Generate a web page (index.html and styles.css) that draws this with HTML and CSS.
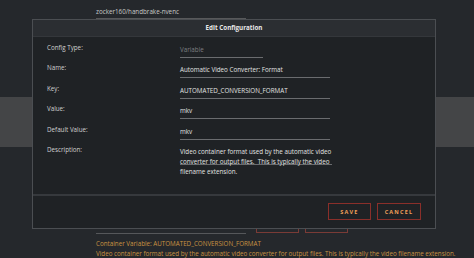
FILE: index.html
```html
<!DOCTYPE html>
<html lang="en">
<head>
    <meta charset="UTF-8">
    <title>Edit Configuration</title>
    <link rel="stylesheet" href="styles.css">
</head>
<body>
    <div class="page">
        <div class="repo">zocker160/handbrake-nvenc</div>
        <div class="band"></div>
        <div class="ghost-row">
            <div class="ghost-line"></div>
            <span class="ghost-btn"></span>
            <span class="ghost-btn"></span>
        </div>
        <p class="hint">Container Variable: AUTOMATED_CONVERSION_FORMAT</p>
        <p class="hint">Video container format used by the automatic video converter for output files. This is typically the video filename extension.</p>
    </div>

    <div class="modal">
        <div class="modal-head">Edit Configuration</div>
        <div class="modal-body">
            <div class="row">
                <div class="label">Config Type:</div>
                <div class="field short dim">Variable</div>
            </div>
            <div class="row">
                <div class="label">Name:</div>
                <div class="field">Automatic Video Converter: Format</div>
            </div>
            <div class="row">
                <div class="label">Key:</div>
                <div class="field">AUTOMATED_CONVERSION_FORMAT</div>
            </div>
            <div class="row">
                <div class="label">Value:</div>
                <div class="field">mkv</div>
            </div>
            <div class="row">
                <div class="label">Default Value:</div>
                <div class="field">mkv</div>
            </div>
            <div class="row">
                <div class="label">Description:</div>
                <div class="field desc">Video container format used by the automatic video<br>converter for output files.&nbsp; This is typically the video<br>filename extension.</div>
            </div>
        </div>
        <div class="modal-foot">
            <button class="btn">SAVE</button>
            <button class="btn">CANCEL</button>
        </div>
    </div>
</body>
</html>
```

FILE: styles.css
```css
body {
    margin: 0;
    background-color: #25282c;
    font-family: "Open Sans", "Noto Sans", sans-serif;
    font-size: 6.25px;
    color: #d8d8d8;
    overflow: hidden;
}

.page {
    height: 258px;
}

.repo {
    margin-left: 96px;
    width: 150px;
    height: 10px;
    padding-top: 8px;
    line-height: 8px;
    color: #c8c8c8;
    border-bottom: 1px solid #58595b;
}

.band {
    margin-top: 78px;
    height: 50px;
    background-color: #444547;
}

.ghost-row {
    margin-top: 67px;
    height: 20px;
    display: flex;
    align-items: flex-end;
}
.ghost-line {
    margin-left: 96px;
    width: 150px;
    border-bottom: 1px solid #55575a;
}
.ghost-btn {
    margin-left: 10px;
    width: 41px;
    height: 18px;
    border: 1px solid #7a3b36;
    margin-bottom: 1px;
}
.ghost-btn + .ghost-btn {
    margin-left: 6px;
}

.hint {
    margin: 0 0 0 96px;
    line-height: 10px;
    color: #c99342;
    white-space: nowrap;
}
.ghost-row + .hint {
    margin-top: 5px;
}

.modal {
    position: absolute;
    left: 32px;
    top: 19px;
    width: 402px;
    height: 208px;
    border: 1px solid #4b4e52;
    background-color: #1f2225;
    display: flex;
    flex-direction: column;
}

.modal-head {
    height: 16px;
    line-height: 16px;
    text-align: center;
    font-weight: bold;
    color: #e8e8e8;
    background-color: #2b2e32;
    border-bottom: 1px solid #34373b;
}

.modal-body {
    flex: 1;
    padding: 6px 0 0 14px;
}

.row {
    display: flex;
    height: 20.4px;
}
.label {
    width: 133px;
    line-height: 10px;
    color: #d0d0d0;
}
.field {
    width: 150px;
    margin-top: 2px;
    line-height: 10px;
    padding-bottom: 2px;
    height: 10px;
    border-bottom: 1px solid #6a6c6f;
    color: #e2e2e2;
    white-space: nowrap;
}
.field.short {
    width: 83px;
}
.field.dim {
    color: #7d7f82;
}
.field.desc {
    width: 152px;
    height: auto;
    line-height: 10.2px;
    padding-bottom: 3px;
}

.modal-foot {
    height: 34px;
    border-top: 2px solid #36393d;
    display: flex;
    justify-content: flex-end;
    align-items: flex-start;
    gap: 6px;
    padding: 7px 14px 0 0;
    box-sizing: border-box;
}

.btn {
    height: 17px;
    width: 43px;
    padding: 0;
    background: transparent;
    border: 1px solid #8a2f2a;
    color: #f0a05a;
    font-family: "Open Sans", "Noto Sans", sans-serif;
    font-size: 5.5px;
    font-weight: bold;
    letter-spacing: 1.2px;
}
.btn + .btn {
    width: 44px;
}
```
